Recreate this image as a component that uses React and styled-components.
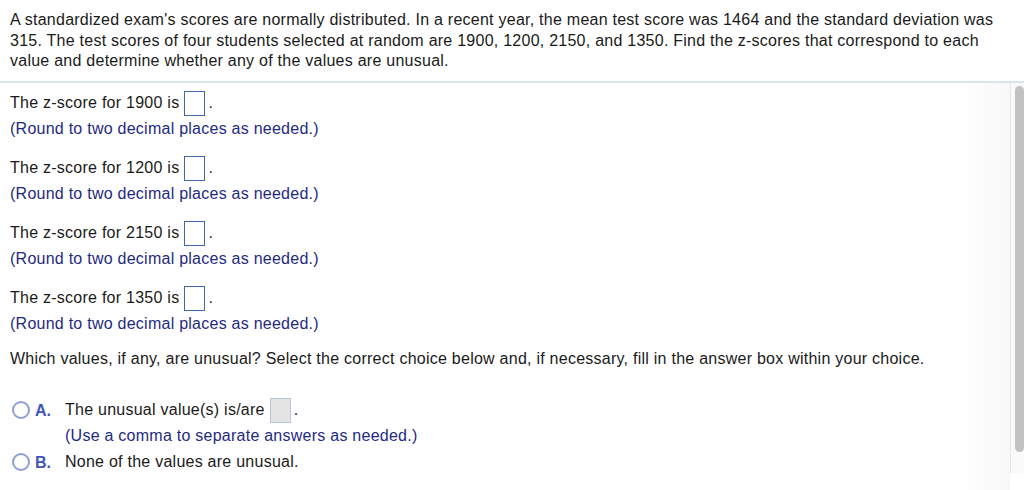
import React from "react";
import styled, { createGlobalStyle } from "styled-components";

const Global = createGlobalStyle`
  html, body { margin: 0; padding: 0; background: #fff; }
  body {
    font-family: "Liberation Sans", Arial, Helvetica, sans-serif;
    color: #1a1a1a;
    letter-spacing: 0.25px;
  }
`;

const Page = styled.div`
  width: 1024px;
  height: 490px;
  display: flex;
  flex-direction: column;
  overflow: hidden;
`;

const Question = styled.p`
  margin: 0;
  padding: 10px 10px 9px 10px;
  font-size: 16px;
  line-height: 20.5px;
  border-bottom: 2px solid #dde3ea;
  white-space: nowrap;
`;

const Body = styled.div`
  flex: 1;
  display: flex;
  min-height: 0;
`;

const Content = styled.div`
  flex: 1;
  padding: 8px 0 0 10px;
  background: linear-gradient(to right, #fff 0, #fff 960px, #f8f8f8 100%);
`;

const Track = styled.div`
  width: 14px;
  border-left: 1px solid #e6e6e6;
  background: #fafafa;
  padding: 3px 1px 0 4px;
  box-sizing: border-box;
  height: 390px;
`;

const Thumb = styled.div`
  width: 9px;
  height: 366px;
  border-radius: 5px;
  background: #c2c2c2;
`;

const Part = styled.div`
  margin-bottom: 15px;
`;

const Line = styled.div`
  display: flex;
  align-items: center;
  font-size: 16px;
  height: 25px;
`;

const Hint = styled.div`
  color: #1e2a84;
  font-size: 16px;
  line-height: 25px;
`;

const AnswerBox = styled.span`
  display: inline-block;
  box-sizing: border-box;
  width: 21px;
  height: 25px;
  margin-left: 5px;
  margin-right: 3px;
  border: 1px solid ${(p) => (p.$disabled ? "#b9c5d9" : "#3e67b0")};
  background: ${(p) => (p.$disabled ? "#e4e4e4" : "#fff")};
`;

const Prompt = styled.div`
  font-size: 16px;
  line-height: 20px;
  margin-top: -2px;
  margin-bottom: 29px;
`;

const Choice = styled.div`
  display: grid;
  grid-template-columns: 20px 33px 1fr;
  align-items: start;
  margin-left: 2px;
  margin-bottom: 2px;
`;

const Radio = styled.span`
  display: block;
  box-sizing: border-box;
  width: 18px;
  height: 18px;
  margin-top: 3px;
  border-radius: 50%;
  border: 2px solid #8c9fd6;
  background: #fff;
`;

const Letter = styled.span`
  font-weight: bold;
  color: #3f56b8;
  font-size: 16px;
  line-height: 25px;
  padding-left: 3px;
  letter-spacing: 0;
`;

const ChoiceText = styled.div`
  display: flex;
  flex-direction: column;
`;

const parts = ["1900", "1200", "2150", "1350"];

export default function App() {
  return (
    <Page>
      <Global />
      <Question>
        A standardized exam's scores are normally distributed. In a recent year, the mean test score was 1464 and the
        standard deviation was
        <br />
        315. The test scores of four students selected at random are 1900, 1200, 2150, and 1350. Find the z-scores that
        correspond to each
        <br />
        value and determine whether any of the values are unusual.
      </Question>
      <Body>
        <Content>
          {parts.map((v) => (
            <Part key={v}>
              <Line>
                The z-score for {v} is
                <AnswerBox />.
              </Line>
              <Hint>(Round to two decimal places as needed.)</Hint>
            </Part>
          ))}
          <Prompt>
            Which values, if any, are unusual? Select the correct choice below and, if necessary, fill in the answer
            box within your choice.
          </Prompt>
          <Choice>
            <Radio />
            <Letter>A.</Letter>
            <ChoiceText>
              <Line>
                The unusual value(s) is/are
                <AnswerBox $disabled />.
              </Line>
              <Hint>(Use a comma to separate answers as needed.)</Hint>
            </ChoiceText>
          </Choice>
          <Choice>
            <Radio />
            <Letter>B.</Letter>
            <ChoiceText>
              <Line>None of the values are unusual.</Line>
            </ChoiceText>
          </Choice>
        </Content>
        <Track>
          <Thumb />
        </Track>
      </Body>
    </Page>
  );
}
